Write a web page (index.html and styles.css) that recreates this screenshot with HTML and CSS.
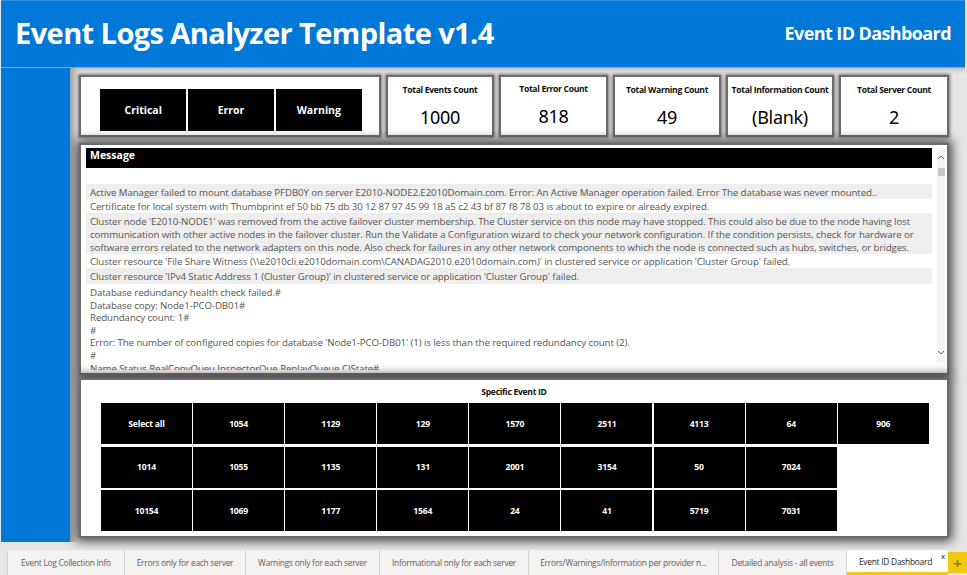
FILE: index.html
```html
<!DOCTYPE html>
<html lang="en">
<head>
<meta charset="utf-8">
<title>Event Logs Analyzer Template</title>
<link rel="stylesheet" href="styles.css">
</head>
<body>
<div class="app">
  <header class="banner">
    <h1 class="title">Event Logs Analyzer Template v1.4</h1>
    <div class="subtitle">Event ID Dashboard</div>
  </header>
  <div class="main">
    <div class="rail"></div>
    <div class="canvas">
      <section class="top">
        <div class="box levels">
          <div class="seg">Critical</div>
          <div class="seg">Error</div>
          <div class="seg">Warning</div>
        </div>
        <div class="box card c1"><div class="card-label">Total Events Count</div><div class="card-value">1000</div></div>
        <div class="box card c2 raised"><div class="card-label">Total Error Count</div><div class="card-value">818</div></div>
        <div class="box card c3"><div class="card-label">Total Warning Count</div><div class="card-value">49</div></div>
        <div class="box card c4"><div class="card-label">Total Information Count</div><div class="card-value">(Blank)</div></div>
        <div class="box card c5"><div class="card-label">Total Server Count</div><div class="card-value">2</div></div>
      </section>
      <section class="box panel messages">
        <div class="table">
          <div class="table-head">Message</div>
          <div class="rows">
            <div class="row shaded">Active Manager failed to mount database PFDB0Y on server E2010-NODE2.E2010Domain.com. Error: An Active Manager operation failed. Error The database was never mounted..</div>
            <div class="row">Certificate for local system with Thumbprint ef 50 bb 75 db 30 12 87 97 45 99 18 a5 c2 43 bf 87 f8 78 03 is about to expire or already expired.</div>
            <div class="row shaded">Cluster node 'E2010-NODE1' was removed from the active failover cluster membership. The Cluster service on this node may have stopped. This could also be due to the node having lost communication with other active nodes in the failover cluster. Run the Validate a Configuration wizard to check your network configuration. If the condition persists, check for hardware or software errors related to the network adapters on this node. Also check for failures in any other network components to which the node is connected such as hubs, switches, or bridges.</div>
            <div class="row">Cluster resource 'File Share Witness (\\e2010cli.e2010domain.com\CANADAG2010.e2010domain.com)' in clustered service or application 'Cluster Group' failed.</div>
            <div class="row shaded">Cluster resource 'IPv4 Static Address 1 (Cluster Group)' in clustered service or application 'Cluster Group' failed.</div>
            <div class="row multi">Database redundancy health check failed.#<br>Database copy: Node1-PCO-DB01#<br>Redundancy count: 1#<br>#<br>Error: The number of configured copies for database 'Node1-PCO-DB01' (1) is less than the required redundancy count (2).<br>#<br>Name Status RealCopyQueu InspectorQue ReplayQueue CIState#</div>
          </div>
        </div>
        <div class="scrollbar">
          <svg class="caret" width="8" height="6" viewBox="0 0 8 6"><path d="M1 5l3-3 3 3" fill="none" stroke="#666" stroke-width="1"/></svg>
          <div class="thumb"></div>
          <svg class="caret down" width="8" height="6" viewBox="0 0 8 6"><path d="M1 1l3 3 3-3" fill="none" stroke="#666" stroke-width="1"/></svg>
        </div>
      </section>
      <section class="box panel events">
        <div class="events-title">Specific Event ID</div>
        <div class="id-grid">
          <div class="id">Select all</div><div class="id">1054</div><div class="id">1129</div><div class="id">129</div><div class="id">1570</div><div class="id">2511</div><div class="id">4113</div><div class="id">64</div><div class="id">906</div>
          <div class="id">1014</div><div class="id">1055</div><div class="id">1135</div><div class="id">131</div><div class="id">2001</div><div class="id">3154</div><div class="id">50</div><div class="id">7024</div><div class="blank"></div>
          <div class="id">10154</div><div class="id">1069</div><div class="id">1177</div><div class="id">1564</div><div class="id">24</div><div class="id">41</div><div class="id">5719</div><div class="id">7031</div><div class="blank"></div>
        </div>
      </section>
    </div>
  </div>
  <nav class="tabs">
    <div class="tab t1">Event Log Collection Info</div>
    <div class="tab t2">Errors only for each server</div>
    <div class="tab t3">Warnings only for each server</div>
    <div class="tab t4">Informational only for each server</div>
    <div class="tab t5">Errors/Warnings/Information per provider n...</div>
    <div class="tab t6">Detailed analysis - all events</div>
    <div class="tab active">Event ID Dashboard<span class="close">x</span></div>
    <div class="add">+</div>
  </nav>
</div>
</body>
</html>
```
FILE: styles.css
```css
* { box-sizing: border-box; }
html, body { margin: 0; height: 100%; }
body {
  background: #e6e6e6;
  font-family: "Open Sans", "Noto Sans", sans-serif;
  overflow: hidden;
}
.app { width: 967px; height: 575px; display: flex; flex-direction: column; padding: 0 2px 0 1px; }

.banner {
  height: 68px;
  flex: none;
  background: #0078d7;
  color: #fff;
  display: flex;
  align-items: center;
  justify-content: space-between;
  padding: 0 14px 3px 14px;
  border-top: 1px solid #2f90e0;
  border-bottom: 1px solid #6fb0e6;
  position: relative;
  z-index: 2;
}
.title { margin: 0; font-size: 29px; font-weight: 700; letter-spacing: -0.58px; white-space: nowrap; }
.subtitle { font-size: 18px; font-weight: 700; letter-spacing: -0.6px; }

.main { display: flex; height: 474px; flex: none; }
.rail { width: 69px; background: #0078d7; flex: none; position: relative; z-index: 2; }
.canvas {
  flex: 1;
  background: #e6e6e6;
  padding: 7px 0 0 9px;
  display: flex;
  flex-direction: column;
  box-shadow: inset 8px 4px 6px -4px #999;
}

.box { background: #fff; border: 2px solid #6b6b6b; box-shadow: 0 0 3px 1px #777; }

.top { display: flex; gap: 5px; height: 62px; flex: none; width: 870px; }
.levels { width: 302px; display: flex; gap: 1.5px; padding: 12px 17px 4px 19px; flex: none; }
.seg {
  flex: 1;
  background: #000;
  color: #fff;
  font-size: 10.5px;
  font-weight: 700;
  display: flex;
  align-items: center;
  justify-content: center;
}
.card { text-align: center; padding-top: 7px; flex: none; }
.c1 { width: 108px; }
.c2 { width: 109px; }
.c3 { width: 108px; }
.c4 { width: 108px; }
.c5 { width: 110px; }
.card-label { font-size: 8.6px; font-weight: 700; line-height: 12px; color: #111; letter-spacing: -0.32px; white-space: nowrap; }
.card-value { font-family: "Noto Sans", sans-serif; font-size: 18px; line-height: 26px; margin-top: 8px; color: #000; letter-spacing: -0.3px; }
.raised { padding-top: 6px; }

.panel { width: 870px; box-shadow: 0 0 10px 3px #444; }
.messages {
  height: 232px;
  margin-top: 6px;
  flex: none;
  display: flex;
  padding: 3px 3px 3px 5px;
  position: relative;
}
.table { width: 846px; flex: none; display: flex; flex-direction: column; overflow: hidden; }
.table-head {
  height: 20px;
  flex: none;
  background: #000;
  color: #fff;
  font-size: 10.5px;
  font-weight: 700;
  padding: 0 4px;
  line-height: 14px;
}
.rows { margin-top: 15.5px; overflow: hidden; height: 186.5px; color: #575553; font-size: 9.7px; letter-spacing: -0.09px; }
.row { padding: 1px 4px 0 4px; line-height: 13px; }
.shaded { padding: 3px 4px 0 4px; line-height: 12.7px; background: #eeeeee; }
.multi { padding-top: 3px; line-height: 12.6px; }
.scrollbar {
  width: 8px;
  margin: 0 0 7px 5px;
  background: #f4f4f4;
  display: flex;
  flex-direction: column;
  align-items: center;
  padding-top: 6px;
}
.caret { flex: none; }
.thumb { width: 7px; height: 8px; background: #c8c8c8; margin-top: 8px; }
.down { margin-top: auto; margin-bottom: 7px; }

.events { height: 160px; margin-top: 3px; flex: none; padding: 0 0 0 20px; position: relative; }
.events-title { height: 23px; padding-top: 6px; font-size: 8.6px; line-height: 13px; font-weight: 700; text-align: center; color: #111; letter-spacing: -0.3px; margin-left: -20px; }
.id-grid {
  display: grid;
  grid-template-columns: repeat(9, 91px);
  grid-auto-rows: 41px;
  column-gap: 1.1px;
  row-gap: 2.7px;
}
.id {
  background: #000;
  color: #fff;
  font-size: 8.6px;
  font-weight: 700;
  letter-spacing: -0.2px;
  display: flex;
  align-items: center;
  justify-content: center;
}

.tabs {
  height: 25px;
  margin: 8px -2px 0 0;
  flex: none;
  display: flex;
  padding-left: 6px;
  color: #605e5c;
  font-size: 8.4px;
  letter-spacing: -0.25px;
  position: relative;
  z-index: 2;
}
.tab {
  background: #f3f2f1;
  border-right: 1px solid #d4d2d0;
  border-left: 1px solid #d4d2d0;
  display: flex;
  align-items: center;
  justify-content: center;
  white-space: nowrap;
  margin-right: -1px;
  flex: none;
}
.t1 { width: 118px; }
.t2 { width: 122px; }
.t3 { width: 135px; }
.t4 { width: 150px; }
.t5 { width: 191px; }
.t6 { width: 129px; }
.active {
  width: 101px;
  background: #fff;
  border: 0;
  border-bottom: 3px solid #f2c811;
  color: #252423;
  padding: 1px 4px 0 0;
  margin-left: 1px;
  margin-right: 0;
  position: relative;
}
.close { position: absolute; top: 2px; right: 3px; font-size: 8px; line-height: 8px; color: #222; }
.add {
  width: 19px;
  height: 21px;
  margin-top: 2px;
  background: #f2c811;
  color: #8f7f2a;
  font-size: 15px;
  font-weight: 700;
  display: flex;
  align-items: center;
  justify-content: center;
  flex: none;
}
```
